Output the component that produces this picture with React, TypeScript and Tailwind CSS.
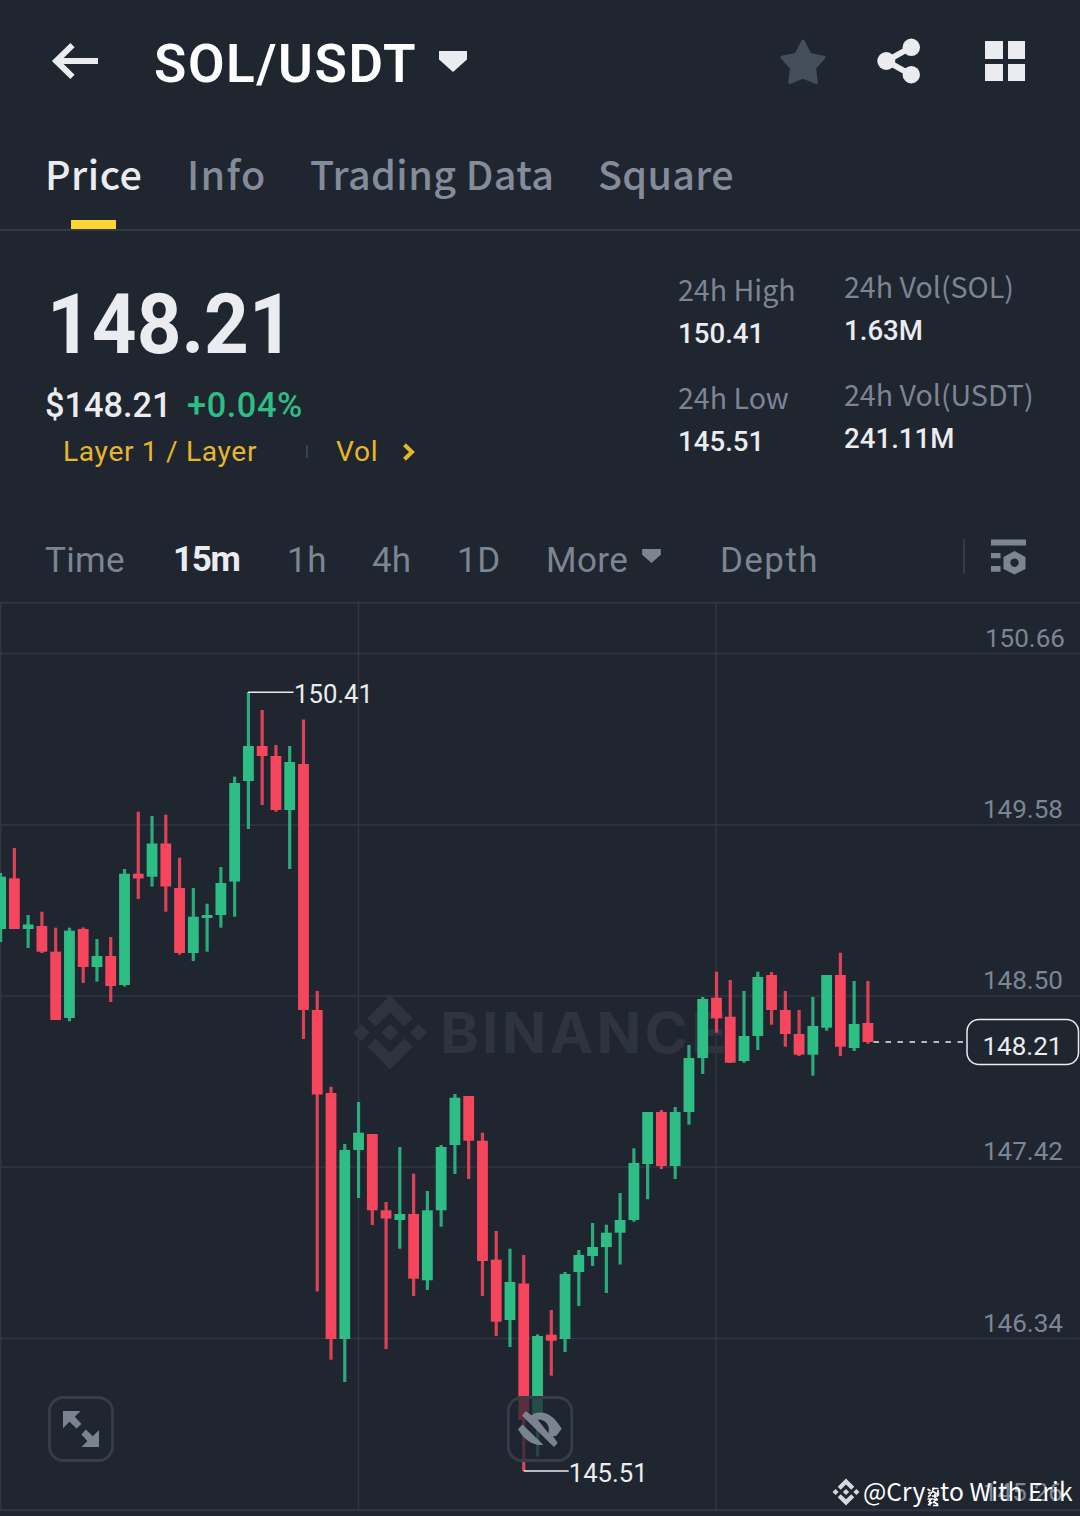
import React from "react";

type Candle = [up: 0 | 1, bodyTop: number, bodyBottom: number, high: number, low: number];

const CANDLES: Candle[] = [
  [1, 876.7, 929, 873, 942],
  [0, 878.3, 929, 848, 929],
  [1, 924.5, 929, 915, 948],
  [0, 926, 951.7, 911.7, 953],
  [0, 951.7, 1020, 927.7, 1020],
  [1, 930.7, 1018, 927.7, 1021.3],
  [0, 929, 967, 927.5, 983],
  [1, 956, 967, 939, 981.7],
  [0, 956, 986, 937, 1002],
  [1, 873.7, 985, 869, 986.5],
  [0, 873.7, 878.5, 811.7, 899],
  [1, 843.5, 876.7, 816, 886.5],
  [0, 843.5, 886.5, 814.7, 911.7],
  [0, 888, 953, 857.7, 954.7],
  [1, 916.7, 953, 888, 961],
  [1, 915, 918, 903.7, 951.7],
  [1, 883, 915, 867, 927.7],
  [1, 783, 881.5, 776.7, 916.7],
  [1, 746, 781, 692, 829],
  [0, 746, 756, 710, 805],
  [0, 756, 810, 745, 811.7],
  [1, 762, 810, 746, 869],
  [0, 764, 1010, 719.5, 1039],
  [0, 1010, 1094.5, 991, 1291.5],
  [0, 1093, 1339, 1086.7, 1359.7],
  [1, 1150, 1339, 1144, 1382],
  [1, 1132.7, 1150, 1102, 1198],
  [0, 1134, 1210.3, 1134, 1225],
  [0, 1210.3, 1218.5, 1202, 1349],
  [1, 1214, 1220, 1147, 1248.7],
  [0, 1214, 1278.7, 1173.7, 1296],
  [1, 1210.3, 1280.3, 1191, 1290],
  [1, 1147, 1210.3, 1145, 1226.7],
  [1, 1097.7, 1145, 1094, 1174],
  [0, 1096, 1140.7, 1096, 1179],
  [0, 1140.7, 1261, 1132.7, 1296],
  [0, 1259.7, 1321.7, 1231, 1336],
  [1, 1282, 1320, 1248.7, 1347],
  [0, 1283.5, 1420, 1255, 1471],
  [1, 1336, 1414, 1334.3, 1456.5],
  [0, 1334.7, 1340.7, 1310, 1375.7],
  [1, 1274, 1339, 1272, 1352],
  [1, 1255, 1272, 1250, 1306],
  [1, 1247, 1256, 1223, 1266],
  [1, 1232.7, 1247, 1224.7, 1293],
  [1, 1220, 1232.7, 1193, 1264.5],
  [1, 1163, 1220, 1148.3, 1221.7],
  [1, 1112, 1164, 1112, 1199.3],
  [0, 1112, 1166, 1110, 1169],
  [1, 1112, 1166, 1107, 1179],
  [1, 1058, 1112, 1045, 1124.7],
  [1, 999, 1058, 997, 1074],
  [0, 997.7, 1018.3, 971.7, 1032.7],
  [0, 1016.7, 1062.7, 980, 1062.7],
  [1, 1036, 1061, 991, 1062.7],
  [1, 977, 1036, 971.7, 1050],
  [0, 975, 1010, 972, 1024.7],
  [0, 1010, 1034, 991, 1046.7],
  [0, 1034, 1054.7, 1010, 1056],
  [1, 1026, 1054.7, 997, 1075.7],
  [1, 975, 1027.7, 975, 1030.7],
  [0, 975, 1046.7, 952.7, 1056],
  [1, 1024, 1048, 981, 1051],
  [0, 1023, 1042, 981, 1043.7],
];

const AXIS: [string, number, number][] = [
  ["150.66", 985, 647.4],
  ["149.58", 983, 818.4],
  ["148.50", 983, 989.4],
  ["147.42", 983, 1160.4],
  ["146.34", 983, 1332.4],
  ["145.26", 983, 1500.5],
];

const LOGO =
  "M38.73 53.2l24.59-24.58 24.6 24.6 14.3-14.31L63.32 0l-38.9 38.9zM0 63.31l14.3-14.31 14.31 14.31-14.31 14.3zM38.73 73.41l24.59 24.59 24.6-24.6 14.31 14.29-38.9 38.91-38.92-38.9zM98 63.31l14.3-14.31 14.31 14.3-14.31 14.32zM77.83 63.3L63.32 48.78 48.81 63.28l14.51 14.5z";

function Caret({ className }: { className: string }) {
  return (
    <svg viewBox="0 0 28 21" className={className} fill="currentColor">
      <path d="M0 0H28V8.5L14 21 0 8.5Z" />
    </svg>
  );
}

function Header() {
  return (
    <header className="flex h-[126px] shrink-0 items-start text-[#eaecef]">
      <svg viewBox="0 0 48 40" className="ml-[51px] mt-[41px] h-10 w-12" fill="none" stroke="currentColor" strokeWidth="6">
        <path d="M21.5 4.2L5.2 20l16.3 15.8M5 20h42" />
      </svg>
      <h1 className="ml-[55px] mt-[34px] w-[285px] whitespace-nowrap text-[53px] leading-[60px] font-semibold tracking-[1.6px] text-white">SOL/USDT</h1>
      <Caret className="mt-[51px] h-[21px] w-7" />
      <svg viewBox="0 0 46 48" className="ml-[313px] mt-[38px] h-12 w-[46px] text-[#454e5b]" fill="currentColor" stroke="currentColor" strokeWidth="3" strokeLinejoin="round">
        <path d="M23 3L30 16.500 44 19.2 34.500 30.3 36.3 44.500 23 39.200 9.7 44.500 11.500 30.3 2 19.2 16 16.500Z" />
      </svg>
      <svg viewBox="0 0 44 46" className="ml-[51px] mt-[38px] h-[46px] w-11" fill="currentColor" stroke="currentColor">
        <path d="M34.500 9L9.500 23l25 14" fill="none" strokeWidth="6" />
        <circle cx="34.300" cy="9.300" r="8.700" stroke="none" />
        <circle cx="9.300" cy="23" r="9" stroke="none" />
        <circle cx="34.300" cy="36.700" r="8.700" stroke="none" />
      </svg>
      <div className="ml-[64px] mt-[41px] grid h-10 w-10 grid-cols-2 gap-[5px]">
        <span className="bg-[#eaecef]" />
        <span className="bg-[#eaecef]" />
        <span className="bg-[#eaecef]" />
        <span className="bg-[#eaecef]" />
      </div>
    </header>
  );
}

function Tabs() {
  return (
    <nav className="flex h-[105px] shrink-0 items-start border-b-2 border-[#333a46] pl-[45px] pt-[22px] font-['Noto_Sans_CJK_SC',sans-serif] text-[39.5px] leading-[50px] font-medium whitespace-nowrap text-[#848b99]">
      <div className="h-20 w-[142px] tracking-[0.5px] text-[#eaecef]">
        Price
        <div className="ml-[26px] mt-[22px] h-[9px] w-[45px] bg-[#fcd535]" />
      </div>
      <div className="w-[123px] tracking-[1.3px]">Info</div>
      <div className="w-[288px] tracking-[0.4px]">Trading Data</div>
      <div className="tracking-[0.3px]">Square</div>
    </nav>
  );
}

function Stat({ label, value, className }: { label: string; value: string; className: string }) {
  return (
    <div className={className}>
      <div className="h-10 font-['Noto_Sans_CJK_SC',sans-serif] text-[28.6px] leading-[38px] text-[#7d8492]">{label}</div>
      <div className="mt-[3px] h-10 origin-left scale-x-[0.97] text-[28.5px] leading-[41px] font-medium text-[#eaecef]">{value}</div>
    </div>
  );
}

function Summary() {
  return (
    <section className="flex h-[291px] shrink-0 whitespace-nowrap">
      <div className="w-[678px]">
        <div className="ml-[47px] mt-[44px] h-[100px] w-[280px] origin-left scale-x-[0.93] text-[84px] leading-[100px] font-bold text-[#eaecef]">148.21</div>
        <div className="ml-[45px] mt-[9px] flex h-[42px] text-[34.3px] leading-[42px] font-medium">
          <div className="w-[142px] text-[#eaecef]">$148.21</div>
          <div className="tracking-[0.6px] text-[#2ebd85]">+0.04%</div>
        </div>
        <div className="ml-[62px] mt-[6px] flex h-10 items-start text-[28.2px] leading-[40px] tracking-[0.65px] text-[#e6b62b]">
          <div className="w-[244px] pl-px">Layer 1 / Layer</div>
          <div className="mt-[13px] h-[13px] w-[2px] bg-[#39414d]" />
          <div className="ml-[28px] w-[67px]">Vol</div>
          <svg viewBox="0 0 12 18" className="mt-[11px] h-[18px] w-3" fill="none" stroke="currentColor" strokeWidth="4">
            <path d="M1.500 1.800L9 9l-7.500 7.200" />
          </svg>
        </div>
      </div>
      <div className="w-[166px] pt-[39px]">
        <Stat label="24h High" value="150.41" className="h-[108px]" />
        <Stat label="24h Low" value="145.51" className="h-[108px]" />
      </div>
      <div className="pt-[36px]">
        <Stat label="24h Vol(SOL)" value="1.63M" className="h-[108px]" />
        <Stat label="24h Vol(USDT)" value="241.11M" className="h-[108px]" />
      </div>
    </section>
  );
}

function Intervals() {
  return (
    <nav className="flex h-20 shrink-0 items-start pl-[45px] pt-[16px] text-[35px] leading-[46px] whitespace-nowrap text-[#7d8492]">
      <div className="w-[128px] tracking-[0.3px]">Time</div>
      <div className="w-[114px] font-bold leading-[44px] tracking-[-1.3px] text-[#eaecef]">15m</div>
      <div className="w-[85px] tracking-[0.5px]">1h</div>
      <div className="w-[85px] tracking-[0.2px]">4h</div>
      <div className="w-[89px] tracking-[0.6px]">1D</div>
      <div className="w-[96px] tracking-[0.4px]">More</div>
      <Caret className="mt-[11px] h-[14px] w-[19px]" />
      <div className="ml-[59px] w-[243px] tracking-[1.4px]">Depth</div>
      <div className="mt-[1px] h-[35px] w-[2px] bg-[#333a46]" />
      <svg viewBox="0 0 38 38" className="ml-[24px] mt-0 h-[38px] w-[38px]" fill="currentColor">
        <path d="M2 1.500h35v6H2zM2 15h9.500v5.200H2zM2 28h9.500v5.800H2z" />
        <path fillRule="evenodd" d="M25.500 13l11 5.900v12L25.500 36.500l-11-5.600v-12zM25.500 20.500a4.200 4.200 0 1 0 .01 0z" />
      </svg>
    </nav>
  );
}

function Chart() {
  return (
    <svg viewBox="0 602 1080 914" className="block h-[914px] w-[1080px] shrink-0" fontFamily="Roboto, sans-serif">
      <g stroke="#303742" strokeWidth="1.500">
        <path d="M0 602.500H1080" strokeWidth="2" />
        <path d="M0 653.500H1080M0 825H1080M0 996H1080M0 1167H1080M0 1338.500H1080M.700 602V1510M358.500 602V1510M716.200 602V1510" />
        <path d="M0 1510.200H1080" strokeWidth="2" />
      </g>
      <g fill="#2d343f">
        <path transform="translate(353 995.500) scale(.585)" d={LOGO} />
        <text x="440" y="1052.500" fontFamily="Inter, sans-serif" fontWeight="700" fontSize="56" letterSpacing="3" textLength="290" lengthAdjust="spacingAndGlyphs">BINANCE</text>
      </g>
      <g fill="#7d8492" fontSize="26.500">
        {AXIS.map(([label, x, y]) => (
          <text key={label} x={x} y={y} textLength="80" lengthAdjust="spacingAndGlyphs">{label}</text>
        ))}
      </g>
      {CANDLES.map(([up, top, bottom, high, low], i) => {
        const x = 0.6 + i * 13.767;
        return (
          <g key={i} fill={up ? "#2ebd85" : "#f6465d"}>
            <rect x={x - 1.6} y={high} width="3.200" height={low - high} opacity=".88" />
            <rect x={x - 5.4} y={top} width="10.800" height={bottom - top} />
          </g>
        );
      })}
      <g stroke="#eaecef" strokeWidth="1.500" fill="none">
        <path d="M248 692.300H293.500M523.700 1471H568.700" />
        <path d="M873.500 1042H964" strokeDasharray="5.500 6.500" />
        <rect x="967" y="1019.500" width="111.500" height="45" rx="12" fill="#1f2630" />
      </g>
      <g fill="#eaecef" fontSize="26">
        <text x="294" y="702.500" textLength="79" lengthAdjust="spacingAndGlyphs">150.41</text>
        <text x="568.700" y="1481.500" textLength="79" lengthAdjust="spacingAndGlyphs">145.51</text>
        <text x="982.500" y="1055.400" fontSize="26.500" textLength="80" lengthAdjust="spacingAndGlyphs">148.21</text>
      </g>
      <g fill="#1f2630" stroke="#363d49" strokeWidth="2.800">
        <rect x="49.500" y="1397.500" width="63" height="63" rx="14" />
        <rect x="508.300" y="1397.500" width="63.500" height="63" rx="14" fillOpacity=".74" />
      </g>
      <g fill="#7b8290">
        <path d="M63 1411h17.500l-5.700 5.700 6.700 7.300-5 4.500-7-6.700-6.500 6.500zM99 1447H81.500l5.900-5.900-6-6.600 4.400-5 7 6.700 6.200-6.200z" />
        <path d="M525.700 1411l5.700 4.200c2.800-2.200 6.200-3 10-2.700 8.600.8 14.300 6.500 20.300 16.300l-5.300 7-3.400.500 4.700 6.700-3.700 4-32-31.200zM537.500 1419.600l10.900 13.600c2.200-7.200-2.700-14.300-10.900-13.600z" fillRule="evenodd" />
        <path d="M522.500 1424.500l20.800 20.300c-10.800 1.300-18.700-4.600-25.300-15.500z" />
      </g>
      <g fill="#d5d8dd">
        <path transform="translate(832.500 1478.500) scale(.213)" d={LOGO} />
      </g>
      <text x="863" y="1500.700" fill="#fff" fontFamily="'Noto Sans CJK SC', sans-serif" fontSize="24.600" textLength="209.500" lengthAdjust="spacing">@Crypto With Erik</text>
      <rect x="926.500" y="1487" width="12.800" height="20" fill="#1f2630" />
      <path d="M927.500 1489l3 2M932 1488.500h6.500M934 1487.500l-2 5M928 1493h4M933 1491.500l5 3M938 1490v6M928 1497l3-2.500M932 1496h6M935 1494v4M927.500 1499h4l-3 3M933 1499l5 1M937 1498l-4 5M928 1505l4-2.500M930 1501v4.500M933 1505.500h5.500M934 1502l4 2.500" stroke="#fff" strokeWidth="1.700" fill="none" />
    </svg>
  );
}

export default function App() {
  return (
    <main className="flex h-[1516px] w-[1080px] flex-col overflow-hidden bg-[#1f2630] font-[Roboto,sans-serif]">
      <Header />
      <Tabs />
      <Summary />
      <Intervals />
      <Chart />
    </main>
  );
}
